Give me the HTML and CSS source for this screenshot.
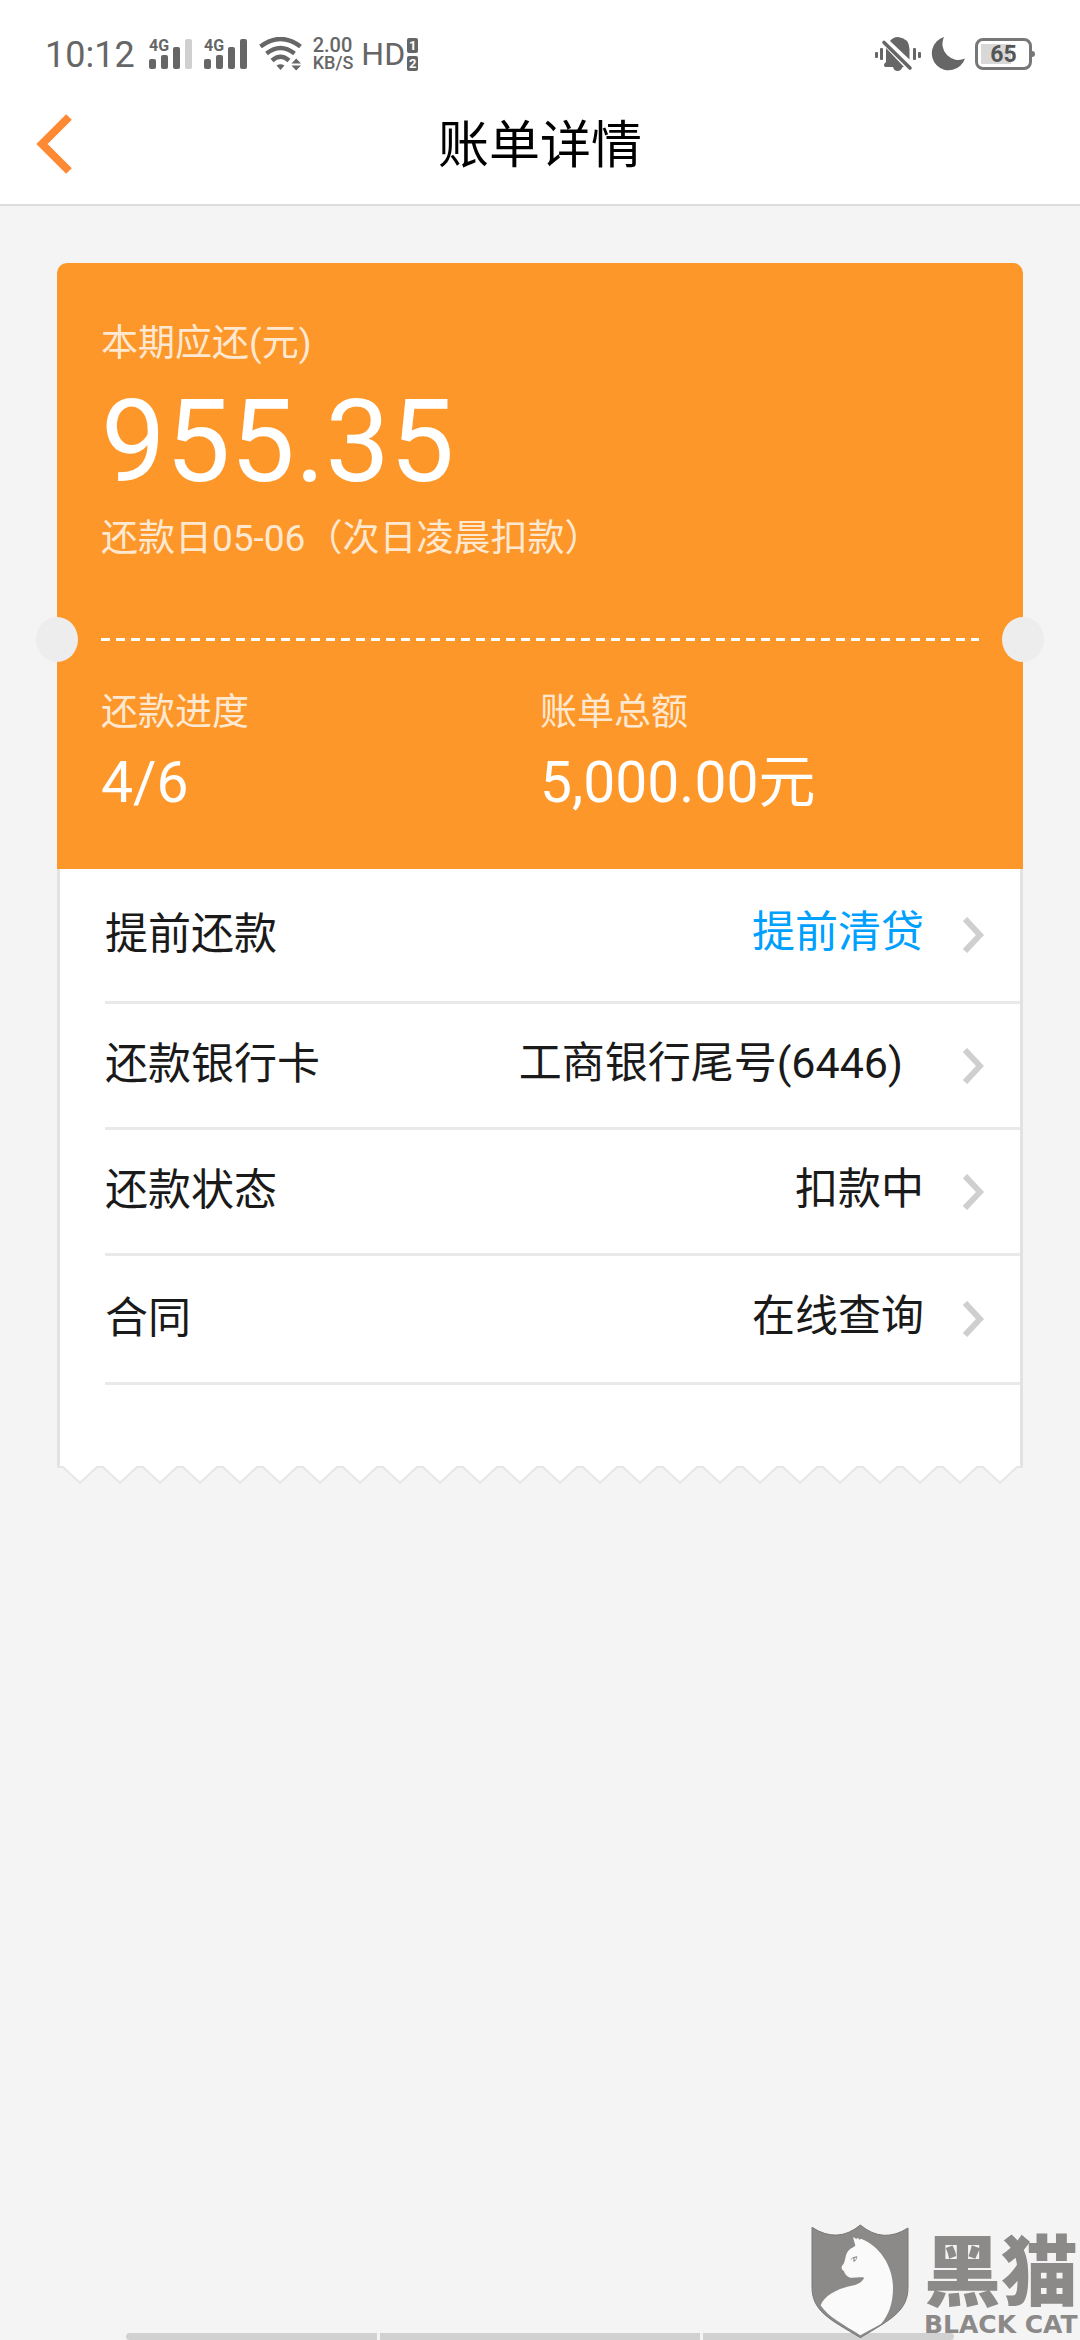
FILE: index.html
```html
<!DOCTYPE html>
<html lang="zh-CN">

<head>
    <meta charset="UTF-8">
    <meta name="viewport" content="width=device-width, initial-scale=1">
    <title>账单详情</title>
    <link rel="stylesheet" href="styles.css">
</head>

<body>
    <div class="status-bar">
        <div class="status-left">
            <span class="time">10:12</span>
            <svg class="signal" width="44" height="32" viewBox="0 0 44 32">
                <text x="0" y="13">4G</text>
                <rect x="0" y="21" width="7" height="10" rx="2" />
                <rect x="12" y="17" width="7" height="14" rx="2" />
                <rect x="24" y="9" width="7" height="22" rx="2" />
                <rect class="weak" x="36" y="1" width="7" height="30" rx="2" />
            </svg>
            <svg class="signal" width="44" height="32" viewBox="0 0 44 32">
                <text x="0" y="13">4G</text>
                <rect x="0" y="21" width="7" height="10" rx="2" />
                <rect x="12" y="17" width="7" height="14" rx="2" />
                <rect x="24" y="9" width="7" height="22" rx="2" />
                <rect x="36" y="1" width="7" height="30" rx="2" />
            </svg>
            <svg class="wifi" width="43" height="34" viewBox="0 0 43 34">
                <g fill="none" stroke="#666" stroke-width="4.4">
                    <path d="M1.5 9.5Q21.5 -5.5 41.5 9.5" />
                    <path d="M7.5 16.5Q21.5 5.5 35.5 16.5" />
                    <path d="M13 23.5Q21.5 16 30 23.5" />
                </g>
                <path fill="#666" d="M17.5 28.5Q21.5 26 25.5 28.5L21.5 33Z" />
                <path fill="#666" d="M32.5 26.5H42L37.2 21.5ZM32.5 28.5H42L37.2 33.5Z" />
            </svg>
            <span class="speed">
                <span class="speed-value">2.00</span>
                <span class="speed-unit">KB/S</span>
            </span>
            <span class="hd">HD</span>
            <span class="sims">
                <span>1</span>
                <span>2</span>
            </span>
        </div>
        <div class="status-right">
            <svg width="46" height="34" viewBox="0 0 46 34" fill="#666">
                <rect x="0" y="15" width="3" height="6" rx="1" />
                <rect x="5" y="11" width="3" height="12" rx="1" />
                <rect x="38" y="11" width="3" height="12" rx="1" />
                <rect x="43" y="15" width="3" height="6" rx="1" />
                <path d="M15 4Q18 0 23 0Q34 1 34.5 12V22.5ZM11 11L29 30H27.5Q26 34 22.5 34Q19 34 18 30H10Q8 28 10 26L11 25Z" />
                <path d="M9 5.5L35 31" stroke="#666" stroke-width="3.6" stroke-linecap="round" />
            </svg>
            <svg width="34" height="34" viewBox="0 0 34 34" fill="#666">
                <path d="M13 0A17 17 0 1 0 34 21.5A16 16 0 0 1 13 0Z" />
            </svg>
            <span class="battery">65</span>
        </div>
    </div>

    <header class="nav">
        <button class="back" type="button" aria-label="返回">
            <svg width="36" height="60" viewBox="0 0 36 60">
                <path d="M33 3L6 30L33 57" fill="none" stroke="#ff8833" stroke-width="8" />
            </svg>
        </button>
        <h1>账单详情</h1>
    </header>

    <main>
        <section class="summary">
            <p class="label">本期应还(元)</p>
            <p class="amount">955.35</p>
            <p class="label">还款日05-06（次日凌晨扣款）</p>
            <div class="divider"></div>
            <div class="totals">
                <div>
                    <p class="label">还款进度</p>
                    <p class="total">4/6</p>
                </div>
                <div>
                    <p class="label">账单总额</p>
                    <p class="total">5,000.00元</p>
                </div>
            </div>
        </section>

        <ul class="details">
            <li>
                <a href="#">
                    <span>提前还款</span>
                    <span class="value highlight">提前清贷</span>
                    <svg class="arrow" viewBox="0 0 21 36"><path d="M2 2L17 18L2 34" /></svg>
                </a>
            </li>
            <li>
                <a href="#">
                    <span>还款银行卡</span>
                    <span class="value bank">工商银行尾号(6446)</span>
                    <svg class="arrow" viewBox="0 0 21 36"><path d="M2 2L17 18L2 34" /></svg>
                </a>
            </li>
            <li>
                <a href="#">
                    <span>还款状态</span>
                    <span class="value">扣款中</span>
                    <svg class="arrow" viewBox="0 0 21 36"><path d="M2 2L17 18L2 34" /></svg>
                </a>
            </li>
            <li>
                <a href="#">
                    <span>合同</span>
                    <span class="value">在线查询</span>
                    <svg class="arrow" viewBox="0 0 21 36"><path d="M2 2L17 18L2 34" /></svg>
                </a>
            </li>
        </ul>

        <!-- torn paper edge -->
        <svg class="torn" width="100%" height="20">
            <defs>
                <pattern id="tooth" x="3" width="40" height="20" patternUnits="userSpaceOnUse">
                    <path d="M0 0H40L37 1L20 17L3 1L0 0Z" fill="#fff" />
                    <path d="M0 1H3L20 17L37 1H40" fill="none" stroke="#e6e6e6" stroke-width="2" />
                </pattern>
            </defs>
            <rect width="100%" height="20" fill="url(#tooth)" />
        </svg>
    </main>

    <footer>
        <div class="gesture-bar">
            <span></span>
            <span class="middle"></span>
            <span></span>
        </div>
    </footer>

    <div class="watermark">
        <svg width="98" height="115" viewBox="62 74 294 345">
            <path fill="#8c8989" stroke="#7a7777" stroke-width="3" d="M65 84Q142 134 210 77Q278 134 353 86V262C353 335 305 358 210 415C115 358 65 335 65 262Z" />
            <path fill="#fafafa" d="M188 113L198 119L202 115L208 121L212 118C268 140 306 198 308 260C309 308 297 346 272 374L210 408C160 376 112 352 91 318C101 290 140 268 184 259C206 255 216 246 222 235C207 231 194 236 180 235C170 232 164 226 161 216C151 208 152 201 160 193C166 183 164 168 173 156C180 146 190 144 195 139Z" />
            <path fill="#8c8989" d="M180 184Q183 172 201 171Q200 185 189 188Q191 180 188 176Q184 178 180 184Z" />
            <circle cx="195" cy="178" r="3" fill="#fafafa" />
        </svg>
        <div class="watermark-text">
            <span class="watermark-cn">黑猫</span>
            <span class="watermark-en">BLACK CAT</span>
        </div>
    </div>
</body>

</html>
```

FILE: styles.css
```css
:root {
    --background: #f4f4f4;
    --foreground: #1a1a1a;
    --status: #666;
    --orange: #fd9729;
    --blue: #00a0ff;
    --line: #e9e9e9;
    --edge: #e2e2e2;
    --notch: #ededed;
    --mark: #8c8989;
}

* {
    box-sizing: border-box;
    padding: 0;
    margin: 0;
}

body {
    display: flex;
    flex-direction: column;
    position: relative;
    min-height: 100vh;
    background: var(--background);
    color: var(--foreground);
    font-family: Roboto, "Noto Sans CJK SC", sans-serif;
}

svg {
    display: block;
    flex: none;
}

/* status bar */
.status-bar {
    display: flex;
    justify-content: space-between;
    align-items: center;
    height: 83px;
    padding: 25px 45px 0 45px;
    background: #fff;
    color: var(--status);
}

.status-left,
.status-right {
    display: flex;
    align-items: center;
}

.status-left {
    gap: 11px;
}

.status-right {
    gap: 10px;
}

.time {
    padding-top: 2px;
    font-size: 36px;
    line-height: 40px;
    margin-right: 3px;
}

.signal {
    overflow: visible;
    fill: var(--status);
    font-size: 16px;
    font-weight: 700;
}

.signal .weak {
    fill: #d0d0d0;
}

.speed {
    display: flex;
    flex-direction: column;
    font-weight: 500;
}

.speed-value {
    font-size: 20px;
    line-height: 17px;
}

.speed-unit {
    font-size: 18px;
    line-height: 17px;
}

.hd {
    margin-left: -3px;
    font-size: 32px;
    line-height: 40px;
}

.sims {
    display: flex;
    flex-direction: column;
    gap: 3px;
    margin-left: -9px;
}

.sims span {
    width: 11px;
    background: var(--status);
    border-radius: 2px;
    color: #fff;
    font-size: 13px;
    font-weight: 700;
    line-height: 15px;
    text-align: center;
}

.battery {
    position: relative;
    width: 57px;
    height: 32px;
    margin-right: 3px;
    border: 3px solid #777;
    border-radius: 8px;
    background: linear-gradient(#d8d8d8, #d8d8d8) 3px 3px / 30px 20px no-repeat;
    color: #555;
    font-size: 23px;
    font-weight: 700;
    line-height: 27px;
    text-align: center;
}

.battery::after {
    content: "";
    position: absolute;
    top: 10px;
    right: -6px;
    width: 3px;
    height: 6px;
    border-radius: 0 3px 3px 0;
    background: #777;
}

/* title bar */
.nav {
    display: grid;
    grid-template-columns: 108px 1fr 108px;
    align-items: center;
    height: 123px;
    background: #fff;
    border-bottom: 2px solid #ddd;
}

.back {
    padding-left: 36px;
    background: none;
    border: none;
    cursor: pointer;
}

.nav h1 {
    padding-top: 5px;
    color: #000;
    font-size: 51px;
    font-weight: 400;
    line-height: 72px;
    text-align: center;
}

main {
    flex: 1;
    padding: 57px 57px 0;
}

/* bill summary */
.summary {
    padding: 53px 44px 45px;
    background: var(--orange);
    border-radius: 10px 10px 0 0;
    color: #fff;
}

.label {
    color: rgba(255, 255, 255, 0.8);
    font-size: 37px;
    line-height: 56px;
}

.amount {
    font-size: 115px;
    line-height: 139px;
}

.divider {
    position: relative;
    height: 3px;
    margin: 71px 0 44px;
    background: repeating-linear-gradient(90deg, #fff 0 9px, transparent 9px 15px);
}

.divider::before,
.divider::after {
    content: "";
    position: absolute;
    top: -21px;
    width: 42px;
    height: 45px;
    border-radius: 50%;
    background: var(--notch);
}

.divider::before {
    left: -65px;
}

.divider::after {
    right: -65px;
}

.totals {
    display: grid;
    grid-template-columns: 1fr 1fr;
}

.total {
    font-size: 57px;
    line-height: 83px;
}

/* detail rows */
.details {
    padding: 0 0 81px 45px;
    background: #fff;
    border: solid var(--edge);
    border-width: 0 3px;
    list-style: none;
}

.details a {
    display: flex;
    align-items: center;
    height: 126px;
    padding-right: 36px;
    border-bottom: 3px solid var(--line);
    color: inherit;
    font-size: 43px;
    line-height: 60px;
    text-decoration: none;
}

.details span {
    padding-bottom: 3px;
}

.details li:first-child a {
    height: 135px;
}

.details li:last-child a {
    height: 129px;
}

.details .value {
    margin-left: auto;
    padding-bottom: 6px;
}

.highlight {
    color: var(--blue);
}

.bank {
    padding-right: 21px;
}

.arrow {
    width: 21px;
    height: 36px;
    margin-left: 39px;
    fill: none;
    stroke: #cfcfcf;
    stroke-width: 6;
}

/* bottom */
.gesture-bar {
    display: flex;
    gap: 3px;
    height: 7px;
    padding: 0 126px;
}

.gesture-bar span {
    flex: 251;
    background: #d1d1d1;
}

.gesture-bar .middle {
    flex: 320;
}

.gesture-bar span:first-child {
    border-radius: 6px 0 0 6px;
}

.gesture-bar span:last-child {
    border-radius: 0 6px 6px 0;
}

.watermark {
    display: flex;
    gap: 15px;
    position: absolute;
    right: 0;
    bottom: 0;
    color: var(--mark);
}

.watermark-text {
    display: flex;
    flex-direction: column;
    width: 156px;
    white-space: nowrap;
}

.watermark-cn {
    font-family: "Noto Sans CJK SC", sans-serif;
    font-size: 77px;
    font-weight: 900;
    line-height: 86px;
}

.watermark-en {
    font-family: "DejaVu Sans", sans-serif;
    font-size: 25px;
    font-weight: 700;
    line-height: 30px;
}
```
